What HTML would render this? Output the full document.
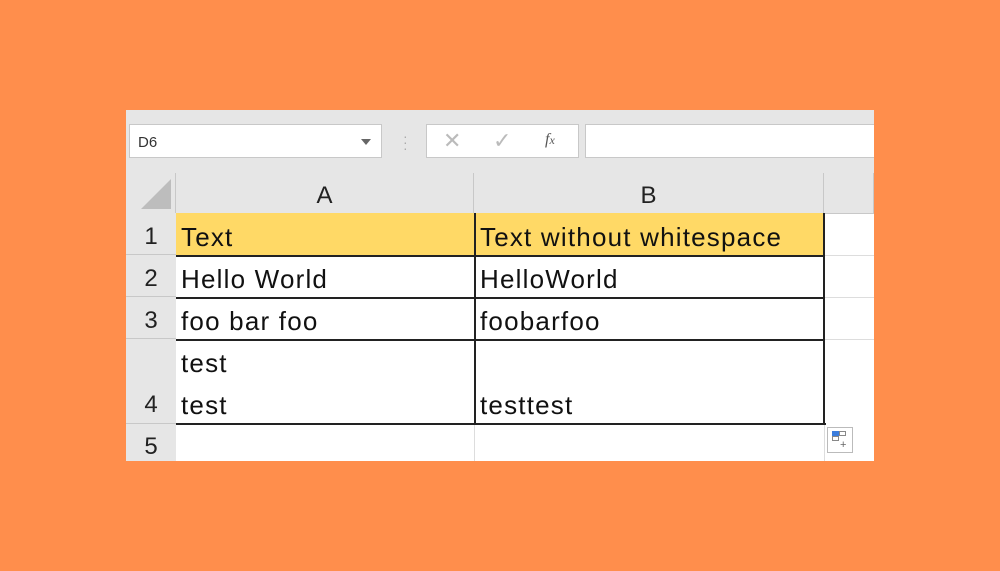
<!DOCTYPE html>
<html><head><style>
body{margin:0;width:1000px;height:571px;background:#ff8e4c;position:relative;overflow:hidden;font-family:"Liberation Sans",sans-serif}
.p{position:absolute;left:126px;top:110px;width:748px;height:351px;background:#e6e6e6;overflow:hidden}
.a{position:absolute}
.nb{left:3px;top:14px;width:253px;height:34px;background:#fff;border:1px solid #c8c8c8;box-sizing:border-box;font-size:15px;color:#333;padding:9px 8px}
.fb{left:300px;top:14px;width:153px;height:34px;background:#fff;border:1px solid #c8c8c8;box-sizing:border-box}
.fx{left:459px;top:14px;width:300px;height:34px;background:#fff;border:1px solid #c8c8c8;box-sizing:border-box}
.grid{left:0;top:63px;width:748px;height:288px;background:#fff}
.ch{position:absolute;top:0;height:40px;background:#e6e6e6;border-right:1px solid #c8c8c8;box-sizing:border-box;text-align:center;font-size:24px;line-height:46px;color:#222}
.rh{position:absolute;left:0;width:50px;background:#e6e6e6;border-bottom:1px solid #c8c8c8;box-sizing:border-box;text-align:center;font-size:24px;color:#222}
.c{position:absolute;box-sizing:border-box;font-size:26px;letter-spacing:1.2px;color:#111;padding-left:5px}
</style></head><body>
<div class="p">
<div class="a nb">D6<span style="position:absolute;right:10px;top:14px;border:5px solid transparent;border-top:6px solid #666;border-bottom:0"></span></div>
<div class="a" style="left:277px;top:23px;color:#aaa;font-size:14px;line-height:6px">·<br>·<br>·</div>
<div class="a fb"><span class="a" style="left:16px;top:3px;color:#bbb;font-size:22px">✕</span><span class="a" style="left:66px;top:3px;color:#bbb;font-size:22px">✓</span><span class="a" style="left:118px;top:6px;color:#555;font-style:italic;font-family:'Liberation Serif',serif;font-size:16px">f<span style="font-size:12px">x</span></span></div>
<div class="a fx"></div>
<div class="a grid">
<div class="ch" style="left:0;width:50px"><div style="position:absolute;right:4px;bottom:4px;width:0;height:0;border-left:30px solid transparent;border-bottom:30px solid #bdbdbd"></div></div>
<div class="ch" style="left:50px;width:298px">A</div>
<div class="ch" style="left:348px;width:350px">B</div>
<div class="ch" style="left:698px;width:50px"></div>
<div class="a" style="left:0;top:40px;width:748px;height:1px;background:#c8c8c8"></div>
<div class="rh" style="top:40px;height:42px;line-height:48px">1</div>
<div class="rh" style="top:82px;height:42px;line-height:48px">2</div>
<div class="rh" style="top:124px;height:42px;line-height:48px">3</div>
<div class="rh" style="top:166px;height:85px;line-height:132px">4</div>
<div class="rh" style="top:251px;height:40px;line-height:46px;border:0">5</div>
<div class="a" style="left:50px;top:40px;width:648px;height:42px;background:#ffd966"></div>
<div class="a" style="left:698px;top:82px;width:50px;height:1px;background:#ddd"></div>
<div class="a" style="left:698px;top:124px;width:50px;height:1px;background:#ddd"></div>
<div class="a" style="left:698px;top:166px;width:50px;height:1px;background:#ddd"></div>
<div class="a" style="left:348px;top:251px;width:1px;height:40px;background:#ddd"></div>
<div class="a" style="left:698px;top:251px;width:1px;height:40px;background:#ddd"></div>
<div class="a" style="left:50px;top:82px;width:648px;height:2px;background:#222"></div>
<div class="a" style="left:50px;top:124px;width:648px;height:2px;background:#222"></div>
<div class="a" style="left:50px;top:166px;width:648px;height:2px;background:#222"></div>
<div class="a" style="left:50px;top:250px;width:650px;height:2px;background:#222"></div>
<div class="a" style="left:348px;top:40px;width:2px;height:212px;background:#222"></div>
<div class="a" style="left:697px;top:40px;width:2px;height:212px;background:#222"></div>
<div class="c" style="left:50px;top:49px">Text</div>
<div class="c" style="left:349px;top:49px">Text without whitespace</div>
<div class="c" style="left:50px;top:91px">Hello World</div>
<div class="c" style="left:349px;top:91px">HelloWorld</div>
<div class="c" style="left:50px;top:133px">foo bar foo</div>
<div class="c" style="left:349px;top:133px">foobarfoo</div>
<div class="c" style="left:50px;top:175px">test</div>
<div class="c" style="left:50px;top:217px">test</div>
<div class="c" style="left:349px;top:217px">testtest</div>
<div class="a" style="left:701px;top:254px;width:26px;height:26px;border:1px solid #bbb;box-sizing:border-box;background:#fff">
<div class="a" style="left:4px;top:3px;width:7px;height:5px;background:#3b7ddd"></div>
<div class="a" style="left:11px;top:3px;width:7px;height:5px;border:1px solid #888;box-sizing:border-box"></div>
<div class="a" style="left:4px;top:8px;width:7px;height:5px;border:1px solid #888;box-sizing:border-box"></div>
<div class="a" style="left:12px;top:11px;font-size:11px;color:#666">+</div>
</div>
</div>
</div>
</body></html>
